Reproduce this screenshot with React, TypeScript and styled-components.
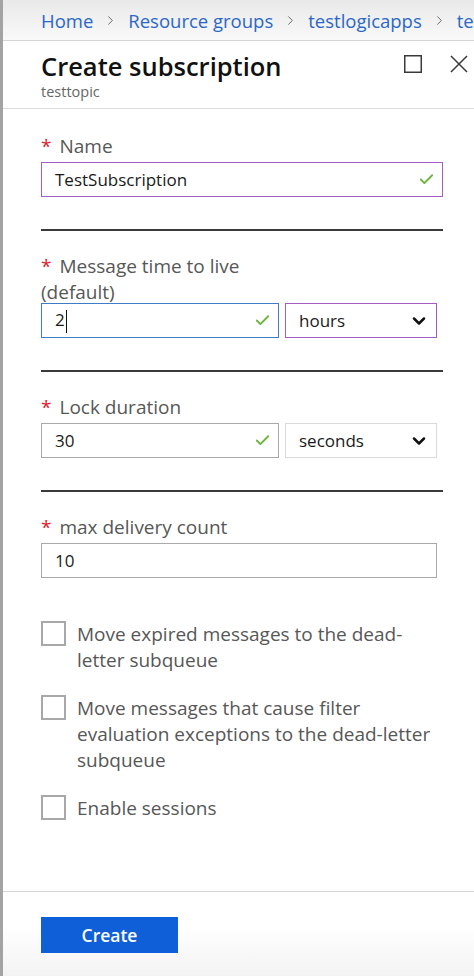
import React from 'react'
import styled, { createGlobalStyle } from 'styled-components'
import { ChevronRight, ChevronDown, Check } from 'lucide-react'

const Global = createGlobalStyle`
html, body { margin: 0; padding: 0; background: #fff; }
body { font-family: "Open Sans", "Noto Sans", sans-serif; }
* { box-sizing: border-box; }
`

const Page = styled.div`
width: 474px;
height: 976px;
display: flex;
flex-direction: column;
border-left: 3px solid #a3a3a3;
overflow: hidden;
`
const Crumbs = styled.nav`
height: 41px;
flex-shrink: 0;
display: flex;
align-items: center;
gap: 10px;
padding-left: 38px;
white-space: nowrap;
overflow: hidden;
background: linear-gradient(#e9e9e9, #f9f9f9);
border-bottom: 1px solid #d6d6d6;
`
const Crumb = styled.span`
font-size: 18.5px;
color: #2b67c6;
`
const Sep = styled.span`
display: flex;
color: #6a6a6a;
`
const Header = styled.header`
height: 68px;
flex-shrink: 0;
display: flex;
justify-content: space-between;
padding: 9px 0 0 38px;
border-bottom: 1px solid #dcdcdc;
`
const Title = styled.h1`
margin: 0;
font-size: 25.5px;
line-height: 32px;
font-weight: 600;
color: #111;
`
const Sub = styled.div`
font-size: 14.5px;
line-height: 20px;
color: #666;
`
const Tools = styled.div`
display: flex;
align-items: flex-start;
gap: 28px;
padding: 5px 6px 0 0;
color: #3a3a3a;
`
const Body = styled.main`
flex: 1;
padding: 24px 31px 0 38px;
`
const Field = styled.section``
const Label = styled.div<{ $gap?: number }>`
font-size: 19px;
line-height: 26px;
color: #575757;
margin-bottom: ${p => p.$gap ?? 3}px;
`
const Star = styled.span`
color: #e0202b;
margin-right: 8px;
`
const Row = styled.div<{ $narrow?: boolean }>`
display: flex;
gap: 6px;
width: ${p => (p.$narrow ? '396px' : '402px')};
`
const Box = styled.div<{ $border: string; $grow?: boolean }>`
height: 35px;
${p => (p.$grow ? 'flex: 1;' : 'width: 152px; flex-shrink: 0;')}
display: flex;
align-items: center;
justify-content: space-between;
padding: 0 7px 0 13px;
border: 1.5px solid ${p => p.$border};
font-size: 17px;
color: #1a1a1a;
background: #fff;
`
const Caret = styled.span`
display: inline-block;
vertical-align: middle;
width: 1px;
height: 23px;
background: #111;
margin-left: 1px;
`
const Divider = styled.hr`
width: 402px;
height: 2px;
border: 0;
margin: 32px 0 22px;
background: #3a3a3a;
`
const Checks = styled.div`
margin-top: 43px;
display: flex;
flex-direction: column;
gap: 22px;
`
const CheckItem = styled.label`
display: flex;
gap: 11px;
align-items: flex-start;
`
const CheckBox = styled.span`
width: 25px;
height: 25px;
flex-shrink: 0;
border: 2px solid #a8a8a8;
`
const CheckText = styled.span`
font-size: 19px;
line-height: 26px;
color: #575757;
width: 360px;
`
const Footer = styled.footer`
height: 85px;
flex-shrink: 0;
padding: 25px 0 0 38px;
border-top: 1px solid #d8d8d8;
background: linear-gradient(#fff 40%, #f3f3f3);
`
const Button = styled.button`
width: 137px;
height: 36px;
border: 0;
background: #0e5fd8;
color: #fff;
font-family: inherit;
font-size: 17.5px;
font-weight: 600;
`

const ok = <Check size={17} strokeWidth={2.6} color="#6db33f" />
const drop = <ChevronDown size={20} strokeWidth={3} color="#111" />

const crumbs = ['Home', 'Resource groups', 'testlogicapps', 'testtopic']

const MaxIcon = () => (
  <svg width="18" height="18" viewBox="0 0 18 18" fill="none" stroke="currentColor" strokeWidth="1.5">
    <rect x="0.75" y="0.75" width="16.5" height="16.5" />
  </svg>
)
const CloseIcon = () => (
  <svg width="18" height="18" viewBox="0 0 18 18" fill="none" stroke="currentColor" strokeWidth="1.5">
    <path d="M1 1L17 17M17 1L1 17" />
  </svg>
)

export default function App() {
  return (
    <Page>
      <Global />
      <Crumbs>
        {crumbs.map((c, i) => (
          <React.Fragment key={c}>
            {i > 0 && (
              <Sep>
                <ChevronRight size={15} strokeWidth={1.6} />
              </Sep>
            )}
            <Crumb>{c}</Crumb>
          </React.Fragment>
        ))}
      </Crumbs>
      <Header>
        <div>
          <Title>Create subscription</Title>
          <Sub>testtopic</Sub>
        </div>
        <Tools>
          <MaxIcon />
          <CloseIcon />
        </Tools>
      </Header>
      <Body>
        <Field>
          <Label>
            <Star>*</Star>Name
          </Label>
          <Row>
            <Box $border="#a35ec4" $grow>
              TestSubscription {ok}
            </Box>
          </Row>
        </Field>
        <Divider />
        <Field>
          <Label $gap={-2}>
            <Star>*</Star>Message time to live
            <br />
            (default)
          </Label>
          <Row $narrow>
            <Box $border="#3d7dc8" $grow>
              <span>
                2<Caret />
              </span>
              {ok}
            </Box>
            <Box $border="#a35ec4">hours {drop}</Box>
          </Row>
        </Field>
        <Divider />
        <Field>
          <Label>
            <Star>*</Star>Lock duration
          </Label>
          <Row $narrow>
            <Box $border="#a9a9a9" $grow>
              30 {ok}
            </Box>
            <Box $border="#dadada">seconds {drop}</Box>
          </Row>
        </Field>
        <Divider />
        <Field>
          <Label>
            <Star>*</Star>max delivery count
          </Label>
          <Row $narrow>
            <Box $border="#a9a9a9" $grow>
              10
            </Box>
          </Row>
        </Field>
        <Checks>
          <CheckItem>
            <CheckBox />
            <CheckText>Move expired messages to the dead-letter subqueue</CheckText>
          </CheckItem>
          <CheckItem>
            <CheckBox />
            <CheckText>Move messages that cause filter evaluation exceptions to the dead-letter subqueue</CheckText>
          </CheckItem>
          <CheckItem>
            <CheckBox />
            <CheckText>Enable sessions</CheckText>
          </CheckItem>
        </Checks>
      </Body>
      <Footer>
        <Button>Create</Button>
      </Footer>
    </Page>
  )
}
